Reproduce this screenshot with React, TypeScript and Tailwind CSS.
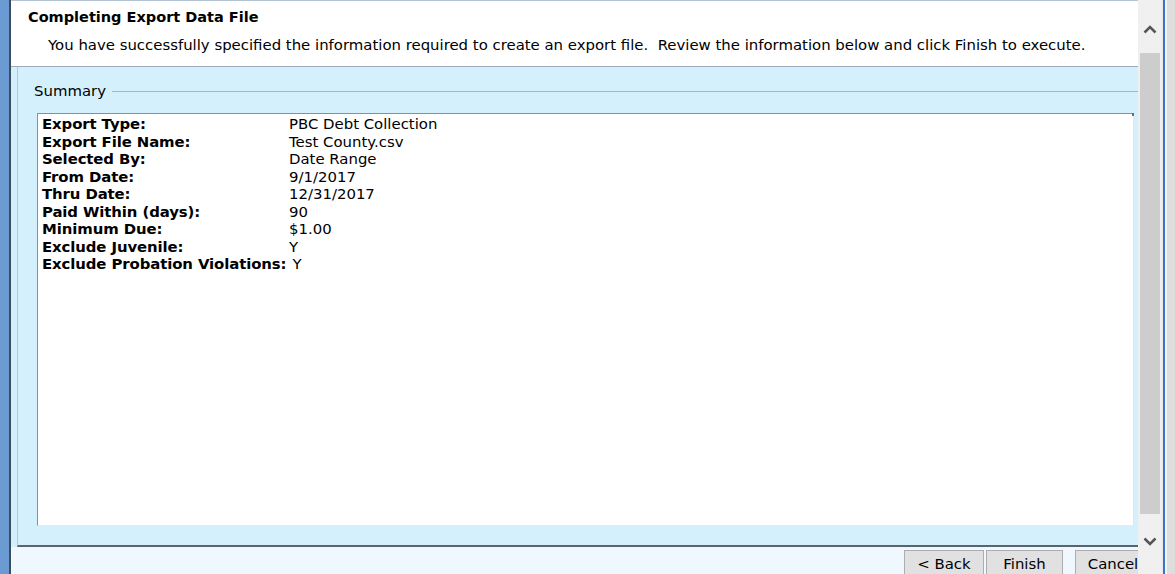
import React from "react";

const rows: [string, string][] = [
  ["Export Type:", "PBC Debt Collection"],
  ["Export File Name:", "Test County.csv"],
  ["Selected By:", "Date Range"],
  ["From Date:", "9/1/2017"],
  ["Thru Date:", "12/31/2017"],
  ["Paid Within (days):", "90"],
  ["Minimum Due:", "$1.00"],
  ["Exclude Juvenile:", "Y"],
  ["Exclude Probation Violations:", "Y"],
];

export default function App() {
  return (
    <div
      className="w-[1175px] h-[574px] flex overflow-hidden bg-white text-[#000]"
      style={{ fontFamily: '"DejaVu Sans", Tahoma, sans-serif' }}
    >
      <div className="w-[9px] h-full bg-[#6a9bd3] shrink-0" />
      <div className="w-[2px] h-full bg-[#3d4d5e] shrink-0" />
      {/* content column */}
      <div className="w-[1127px] shrink-0 h-full flex flex-col overflow-hidden">
        <div className="h-[66px] shrink-0 bg-white border-t border-[#b4c4d4] pl-[17px] pt-[6px]">
          <div className="text-[14.5px] font-bold leading-[20px]">Completing Export Data File</div>
          <div className="text-[14.9px] leading-[20px] mt-[8px] pl-[20px]">
            You have successfully specified the information required to create an export file.&nbsp; Review the information below and click Finish to execute.
          </div>
        </div>
        <div className="h-px bg-[#9fabb7] shrink-0" />
        <div className="flex-1 bg-[#d5f0fd] pl-[6px] flex flex-col">
          <div className="flex-1 border-l border-[#b9c6d0] flex flex-col border-b-2 border-b-[#5b646d]">
            <div className="h-[23px] shrink-0" />
            <div className="flex items-center h-[3px] shrink-0 relative">
              <span className="text-[14.9px] leading-[18px] pl-[16px] pr-[6px] bg-[#d5f0fd] relative z-10 -mt-[1px]">Summary</span>
              <div className="flex-1 h-px bg-[#a9b6c1]" />
            </div>
            <div className="h-[20px] shrink-0" />
            <div className="ml-[19px] mr-[4px] h-[413px] bg-white border-l border-t border-[#8e8e8e] border-r border-r-[#d8e8f4] border-b border-b-[#f2e6e8] pl-[4px] pt-[2px] relative">
              <div className="absolute -top-px -right-px w-[2px] h-[3px] bg-[#6e6e6e]" />
              {rows.map(([k, v]) => (
                <div key={k} className="flex text-[14.9px] leading-[17.5px] h-[17.5px]">
                  <span className="min-w-[247px] pr-[6px] font-bold shrink-0 tracking-[-0.1px]">{k}</span>
                  <span>{v}</span>
                </div>
              ))}
            </div>
            <div className="flex-1" />
          </div>
        </div>
        <div className="h-[27px] shrink-0 bg-[#f0f8ff] flex items-start pt-[3px] overflow-hidden">
          <div className="ml-[893px] flex shrink-0">
            <button className="w-[80px] h-[28px] bg-[#e1e1e1] border border-[#adadad] text-[14.9px] leading-[22px] text-center">&lt; Back</button>
            <button className="w-[77px] h-[28px] ml-[2px] bg-[#e1e1e1] border border-[#adadad] text-[14.9px] leading-[22px] text-center">Finish</button>
            <button className="w-[76px] h-[28px] ml-[12px] bg-[#e1e1e1] border border-[#adadad] text-[14.9px] leading-[22px] text-center">Cancel</button>
          </div>
        </div>
      </div>
      {/* scrollbar */}
      <div className="w-[24px] h-full shrink-0 bg-[#f0f0f0] flex flex-col items-center">
        <div className="h-[53px] w-full flex items-center justify-center pt-[6px]">
          <svg width="14" height="9" viewBox="0 0 14 9">
            <path d="M1.5 7.5 L7 2 L12.5 7.5" fill="none" stroke="#555555" strokeWidth="2.5" />
          </svg>
        </div>
        <div className="w-[20px] h-[461px] bg-[#cdcdcd]" />
        <div className="flex-1 w-full flex items-start justify-center pt-[23px]">
          <svg width="14" height="9" viewBox="0 0 14 9">
            <path d="M1.5 1.5 L7 7 L12.5 1.5" fill="none" stroke="#555555" strokeWidth="2.5" />
          </svg>
        </div>
      </div>
      <div className="w-px h-full bg-[#e8e8e8] shrink-0" />
      <div className="w-[2px] h-full bg-[#3b73c8] shrink-0" />
      <div className="w-[2px] h-full bg-[#f4f4f4] shrink-0" />
      <div className="flex-1 h-full bg-[#dedede]" />
    </div>
  );
}
